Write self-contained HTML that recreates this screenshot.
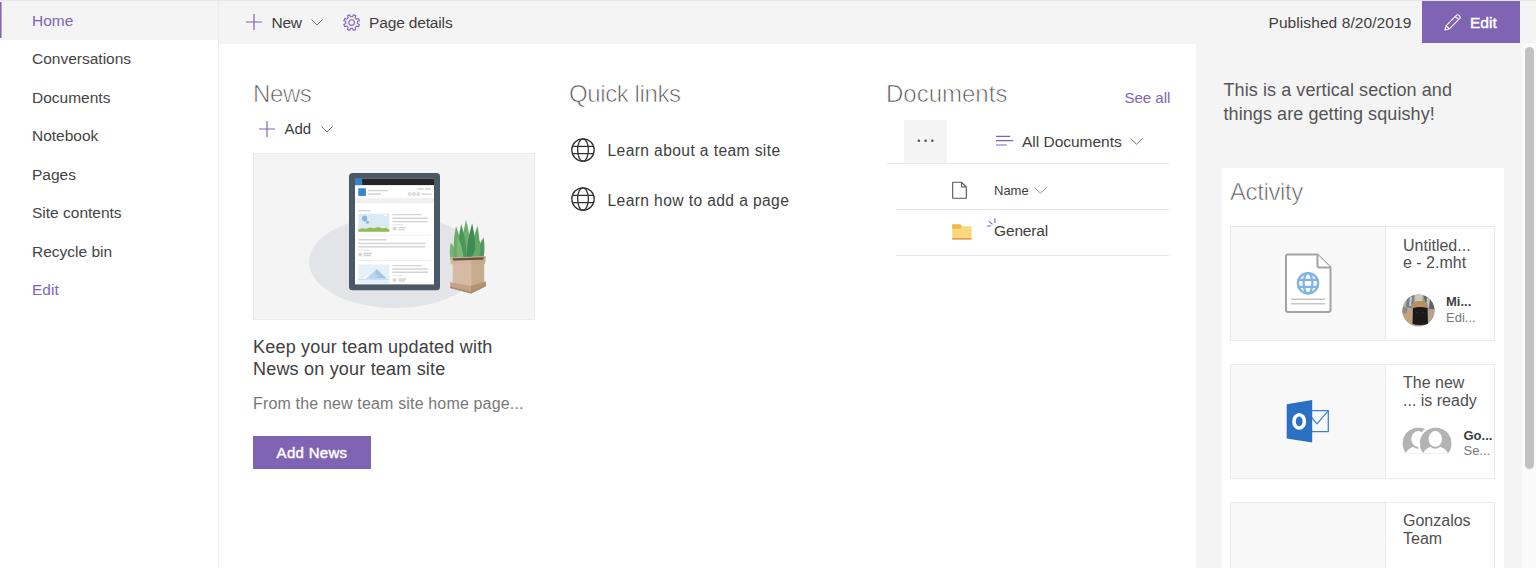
<!DOCTYPE html>
<html><head><meta charset="utf-8">
<style>
html,body{margin:0;padding:0;}
body{width:1536px;height:568px;overflow:hidden;position:relative;background:#fff;font-family:"Liberation Sans",sans-serif;color:#404040;}
.a{position:absolute;white-space:nowrap;line-height:1;}
svg{position:absolute;overflow:visible;}
.nav{font-size:15.5px;color:#444;left:32px;margin-top:0.5px;}
.pur{color:#8064b4;}
.title{font-size:24px;color:#555;letter-spacing:-0.4px;-webkit-text-stroke:0.7px #fff;}
</style></head><body>

<!-- top border line -->
<div style="position:absolute;left:0;top:0;width:1536px;height:1px;background:#e6e6e6"></div>
<!-- left nav -->
<div style="position:absolute;left:0;top:1px;width:218px;height:39px;background:#f4f4f4"></div>
<div style="position:absolute;left:0;top:2px;width:1px;height:36px;background:#8064b4"></div><div style="position:absolute;left:1px;top:2px;width:1px;height:36px;background:#b9a8d6"></div>
<div style="position:absolute;left:218px;top:0;width:1px;height:568px;background:#ebebeb"></div>

<div class="a nav pur" style="top:12.2px">Home</div>
<div class="a nav" style="top:50.7px">Conversations</div>
<div class="a nav" style="top:89.4px">Documents</div>
<div class="a nav" style="top:127.7px">Notebook</div>
<div class="a nav" style="top:166.2px">Pages</div>
<div class="a nav" style="top:204.7px">Site contents</div>
<div class="a nav" style="top:243.2px">Recycle bin</div>
<div class="a nav pur" style="top:281.7px">Edit</div>

<!-- command bar -->
<div style="position:absolute;left:219px;top:1px;width:1317px;height:43px;background:#f4f4f4"></div>
<svg style="left:246px;top:14px" width="16" height="16"><path d="M8 0V16M0 8H16" stroke="#8064b4" stroke-width="1.2"/></svg>
<div class="a" style="left:271.5px;top:15.2px;font-size:15.5px;color:#404040;letter-spacing:-0.3px">New</div>
<svg style="left:311px;top:19px" width="12" height="7"><path d="M0.5 0.5L6 6L11.5 0.5" fill="none" stroke="#777" stroke-width="1"/></svg>
<svg style="left:342.8px;top:13.7px" width="17.2" height="17.2" viewBox="0 0 17.2 17.2"><g fill="none" stroke="#8064b4" stroke-width="1.1" stroke-linejoin="round"><path d="M9.57 2.78 L10.47 0.82 L12.78 1.78 L12.03 3.80 L13.40 5.17 L15.42 4.42 L16.38 6.73 L14.42 7.63 L14.42 9.57 L16.38 10.47 L15.42 12.78 L13.40 12.03 L12.03 13.40 L12.78 15.42 L10.47 16.38 L9.57 14.42 L7.63 14.42 L6.73 16.38 L4.42 15.42 L5.17 13.40 L3.80 12.03 L1.78 12.78 L0.82 10.47 L2.78 9.57 L2.78 7.63 L0.82 6.73 L1.78 4.42 L3.80 5.17 L5.17 3.80 L4.42 1.78 L6.73 0.82 L7.63 2.78Z"/><circle cx="8.6" cy="8.6" r="2.8"/></g></svg>
<div class="a" style="left:369px;top:15.2px;font-size:15.5px;color:#404040;letter-spacing:-0.15px">Page details</div>

<div class="a" style="left:1268.5px;top:15.2px;font-size:15.5px;color:#404040;letter-spacing:0.08px">Published 8/20/2019</div>
<div style="position:absolute;left:1422px;top:1px;width:98px;height:43px;background:#8064b4"></div>
<svg style="left:1444px;top:14px" width="17" height="17" viewBox="0 0 17 17"><g fill="none" stroke="#fff" stroke-width="1.1" stroke-linejoin="round"><path d="M1 16L2.2 11.6L12.6 1.2a1.4 1.4 0 0 1 2 0l1.2 1.2a1.4 1.4 0 0 1 0 2L5.4 14.8z M2.2 11.6L5.4 14.8 M11.4 2.4L14.6 5.6"/></g></svg>
<div class="a" style="left:1470px;top:14.5px;font-size:15.5px;color:#fff;-webkit-text-stroke:0.45px #fff">Edit</div>

<!-- right gray vertical section -->
<div style="position:absolute;left:1196px;top:43px;width:326px;height:525px;background:#f4f4f4"></div>
<!-- scrollbar -->
<div style="position:absolute;left:1522px;top:43px;width:14px;height:525px;background:#fafafa"></div>
<div style="position:absolute;left:1525px;top:47px;width:9px;height:422px;border-radius:4.5px;background:#c1c1c1"></div>


<!-- NEWS -->

<svg style="left:254px;top:154px;z-index:2" width="280" height="165" viewBox="254 154 280 165">
<ellipse cx="395" cy="262" rx="86" ry="46" fill="#e3e4e7"/>
<rect x="349" y="173" width="91" height="117.3" rx="3.5" fill="#4b5865"/>
<rect x="355" y="178.7" width="79" height="105.7" fill="#fff"/>
<rect x="355" y="178.7" width="79" height="6.4" fill="#252525"/>
<rect x="355" y="178.7" width="7.2" height="6.4" fill="#3384cf"/>
<rect x="358.3" y="188.3" width="7.6" height="7.6" fill="#3485cc"/>
<g stroke="#d2d2d2" stroke-width="1.3">
<path d="M368 190.6H388M368 194H381M417.2 189H423.5M425 189H430.5M421.5 194.2H431.5"/>
</g>
<g fill="#dedede" stroke="#cfcfcf" stroke-width="0.5"><circle cx="409.7" cy="194" r="1.7"/><circle cx="414" cy="194" r="1.7"/><circle cx="418.3" cy="194" r="1.7"/></g>
<rect x="355" y="198.2" width="79" height="5" fill="#efefef"/>
<g stroke="#d4d4d4" stroke-width="1.4">
<path d="M358.3 210.7H370.4"/>
<path d="M392.4 214.6H421.6M392.4 218.3H427.8M392.4 221.6H427.8M398.5 227.6H406M398.5 229.6H405"/>
<path d="M358.3 239.8H387M358.3 243.5H425.3M358.3 246.8H425.3M363.5 253.5H372M363.5 255.5H371"/>
<path d="M392.4 265.6H421.6M392.4 269H427.8M392.4 272.3H427.8M398.5 279H406M398.5 281H405"/>
</g>
<g stroke="#e3e3e3" stroke-width="1"><path d="M392.4 224.7H403M358.3 250H369M392.4 275.6H403"/></g>
<g stroke="#efefef" stroke-width="1"><path d="M358 235.2H431M358 260.6H431"/></g>
<g fill="#d8d8d8"><circle cx="394.6" cy="228.6" r="2"/><circle cx="360.3" cy="254.6" r="2"/><circle cx="394.6" cy="280" r="2"/></g>
<rect x="358.3" y="213.7" width="31" height="18.1" fill="#dceaf5"/>
<path d="M358.3 229.5L362 228.3L366 228.8L370 227.6L374 228.2L378 227L382 228.3L386 228L389.3 229.5V231.8H358.3Z" fill="#8dc050"/>
<ellipse cx="364.6" cy="218.5" rx="2.6" ry="3" fill="#8ab6dd"/>
<circle cx="367.5" cy="222.3" r="1.5" fill="#8ab6dd"/>
<path d="M384 215.5H387" stroke="#fff" stroke-width="1"/>
<rect x="358.3" y="264.5" width="31" height="19.4" fill="#e6f0f8"/>
<path d="M376.5 268.9L386.8 278.5H366Z" fill="#9fc4e6"/>
<path d="M376.5 268.9L373 275L370 278.5H361.5L368 275.5Z" fill="#fff"/>
<path d="M376.5 268.9L375 273L379 277L372 278.5H366Z" fill="#b9d5ee"/>
<path d="M358.3 279.5H389.3" stroke="#c7dcee" stroke-width="0.9"/>
<!-- plant -->
<path d="M458.9 262.2Q458.5 252.6 450.8 242.5Q448.3 254.9 452.1 263.8Z" fill="#78b374"/>
<path d="M462.2 262.7Q463.0 245.9 456 225.8Q451.8 246.6 454.8 263.3Z" fill="#6aa96a"/>
<path d="M481.9 263.7Q485.9 252.5 483.6 237.3Q475.6 250.4 475.1 262.3Z" fill="#4f9a5c"/>
<path d="M478.2 263.3Q481.5 246.7 477.5 225.8Q470.2 245.8 470.8 262.7Z" fill="#5da467"/>
<path d="M470.5 263.0Q472.3 243.4 466 219.7Q460.3 243.6 462.5 263.0Z" fill="#6fae6d"/>
<path d="M466.2 262.9Q467.6 245.3 461.3 224Q456.3 245.6 458.8 263.1Z" fill="#4a955a"/>
<path d="M474.2 263.2Q476.9 245.3 472.2 223.2Q465.6 244.8 466.8 262.8Z" fill="#3f8b52"/>
<path d="M464.0 263.7Q464.1 250.9 458 236Q455.2 251.9 458.0 264.3Z" fill="#7cb878"/>
<path d="M476.9 264.7Q481.1 254.3 480 240Q472.3 252.1 471.1 263.3Z" fill="#66a96a"/>
<path d="M452.7 263.5H484.1V282.5L471.4 286L452.7 282.5Z" fill="#d6baa4"/>
<path d="M471.4 263.5H484.1V282.5L471.4 286Z" fill="#c9ab92"/>
<path d="M450.2 257.5L485.6 256.3L485 263.8L471.4 264.5L450.8 264.3Z" fill="#d3b69e"/>
<path d="M471.4 256.8L485.6 256.3L485 263.8L471.4 264.5Z" fill="#c6a88e"/>
<path d="M452.5 258.2L484 257.2L483 259.8L453.2 260.4Z" fill="#6b5242"/>
<path d="M450.2 282L471 285.8L486 281.5V286L471 293.5L450.2 288Z" fill="#c4a286"/>
<path d="M471 285.8L486 281.5V286L471 293.5Z" fill="#b39174"/>
<path d="M450.2 286.5L471 292L486 284.8V286L471 293.5L450.2 288Z" fill="#a98667"/>
</svg>
<div class="a title" style="left:253px;top:82px">News</div>
<svg style="left:259px;top:121px" width="16" height="16"><path d="M8 0V16M0 8H16" stroke="#8064b4" stroke-width="1.2"/></svg>
<div class="a" style="left:284.5px;top:121.3px;font-size:15px;color:#404040">Add</div>
<svg style="left:321px;top:126px" width="12" height="7"><path d="M0.5 0.5L6 6L11.5 0.5" fill="none" stroke="#777" stroke-width="1"/></svg>
<div style="position:absolute;left:253px;top:153px;width:280px;height:165px;background:#f4f4f4;border:1px solid #eaeaea"></div>
<div class="a" style="left:253px;top:337.2px;font-size:18px;line-height:21.5px;color:#404040;white-space:normal;width:290px;letter-spacing:0.2px">Keep your team updated with<br>News on your team site</div>
<div class="a" style="left:253px;top:396px;font-size:16px;color:#777;letter-spacing:0.16px">From the new team site home page...</div>
<div style="position:absolute;left:253px;top:436px;width:118px;height:33px;background:#8064b4"></div>
<div class="a" style="left:253px;top:445.3px;width:118px;text-align:center;font-size:15px;color:#fff;-webkit-text-stroke:0.45px #fff;letter-spacing:0.3px">Add News</div>

<!-- QUICK LINKS -->
<div class="a title" style="left:569px;top:82px">Quick links</div>
<svg style="left:571px;top:138px" width="24" height="24" viewBox="0 0 24 24"><g fill="none" stroke="#333" stroke-width="1.3"><circle cx="12" cy="12" r="11.2"/><ellipse cx="12" cy="12" rx="5.4" ry="11.2"/><path d="M1.2 8.3H22.8M1.2 15.7H22.8"/></g></svg>
<div class="a" style="left:607.5px;top:143.2px;font-size:15.6px;color:#404040;letter-spacing:0.4px">Learn about a team site</div>
<svg style="left:571px;top:187px" width="24" height="24" viewBox="0 0 24 24"><g fill="none" stroke="#333" stroke-width="1.3"><circle cx="12" cy="12" r="11.2"/><ellipse cx="12" cy="12" rx="5.4" ry="11.2"/><path d="M1.2 8.3H22.8M1.2 15.7H22.8"/></g></svg>
<div class="a" style="left:607.5px;top:193px;font-size:15.6px;color:#404040;letter-spacing:0.4px">Learn how to add a page</div>

<!-- DOCUMENTS -->
<div class="a title" style="left:886px;top:82px;letter-spacing:0px">Documents</div>
<div class="a pur" style="left:1124.5px;top:90px;font-size:15px">See all</div>
<div style="position:absolute;left:904px;top:120px;width:43px;height:43px;background:#f4f4f4"></div>
<svg style="left:916px;top:138px" width="20" height="6"><g fill="#555"><circle cx="2.9" cy="2.75" r="1.3"/><circle cx="9.6" cy="2.75" r="1.3"/><circle cx="16.3" cy="2.75" r="1.3"/></g></svg>
<svg style="left:996px;top:135px" width="19" height="11"><g stroke="#8064b4" stroke-width="1.2"><path d="M0 1.4H14.1M0 5.6H17.3M0 10H10.8"/></g></svg>
<div class="a" style="left:1022px;top:133.8px;font-size:15.5px;color:#404040;letter-spacing:-0.02px">All Documents</div>
<svg style="left:1130px;top:138px" width="13" height="7"><path d="M0.5 0.5L6.5 6.3L12.5 0.5" fill="none" stroke="#777" stroke-width="1"/></svg>
<div style="position:absolute;left:887px;top:163px;width:282px;height:1px;background:#e8e8e8"></div>
<svg style="left:952px;top:181px" width="16" height="19" viewBox="0 0 16 19"><path d="M0.7 1.3H9.6L14.3 6V17.3H0.7Z M9.6 1.3V6H14.3" fill="none" stroke="#555" stroke-width="1.1" stroke-linejoin="round"/></svg>
<div class="a" style="left:994px;top:184px;font-size:13px;color:#404040">Name</div>
<svg style="left:1034px;top:187px" width="13" height="7"><path d="M0.5 0.5L6.5 6.3L12.5 0.5" fill="none" stroke="#999" stroke-width="1"/></svg>
<div style="position:absolute;left:896px;top:209px;width:273px;height:1px;background:#e8e8e8"></div>
<svg style="left:952px;top:224px" width="20" height="16" viewBox="0 0 20 16"><rect x="0.2" y="2.3" width="19.3" height="12" fill="#fad77e"/><path d="M0.2 0.3H7.5Q9.5 0.3 9.5 2.3Q9.5 4.8 7.5 4.8H0.2Z" fill="#f0b546"/><rect x="0.2" y="14" width="19.3" height="1.7" fill="#e3a250"/></svg>
<svg style="left:986px;top:217px" width="10" height="10"><g stroke="#8064b4" stroke-width="1.1"><path d="M8.9 1.2V6M2.8 4.2L6.5 7.3M0.9 9.2L5.2 8.8"/></g></svg>
<div class="a" style="left:994px;top:223.3px;font-size:15.5px;color:#404040;letter-spacing:-0.15px">General</div>
<div style="position:absolute;left:896px;top:255px;width:273px;height:1px;background:#e8e8e8"></div>

<!-- VERTICAL SECTION -->
<div class="a" style="left:1223.5px;top:78px;font-size:18px;line-height:24px;color:#555;white-space:normal;width:290px;letter-spacing:0.08px">This is a vertical section and<br>things are getting squishy!</div>
<div style="position:absolute;left:1222px;top:168px;width:282px;height:400px;background:#fff"></div>
<div class="a title" style="left:1230px;top:180px">Activity</div>

<!-- TILE 1 -->
<div style="position:absolute;left:1230px;top:226px;width:263px;height:113px;border:1px solid #eaeaea;background:#fff"></div>
<div style="position:absolute;left:1231px;top:227px;width:154px;height:113px;background:#f8f8f8;border-right:1px solid #eaeaea"></div>
<svg style="left:1284px;top:252px" width="50" height="62" viewBox="1284 252 50 62">
<path d="M1288 254.5H1317.5L1330.5 267.5V310Q1330.5 312 1328.5 312H1288Q1286 312 1286 310V256.5Q1286 254.5 1288 254.5Z" fill="#fff" stroke="#a3a3a3" stroke-width="2" stroke-linejoin="round"/>
<path d="M1317.5 254.5V265.5Q1317.5 267.5 1319.5 267.5H1330.5" fill="#fff" stroke="#a3a3a3" stroke-width="2" stroke-linejoin="round"/>
<g stroke="#7fb3e6" stroke-width="2.3" fill="none"><circle cx="1308" cy="283.3" r="10.1"/><ellipse cx="1308" cy="283.3" rx="4.4" ry="10.1"/><path d="M1297.5 279.8H1318.5M1297.5 286.8H1318.5"/></g>
<path d="M1291 299.3H1325.2M1291 303.8H1325.2" stroke="#c6c6c6" stroke-width="1.5"/>
</svg>
<div class="a" style="left:1403px;top:236.8px;font-size:16px;line-height:17px;color:#505050;white-space:normal;width:90px">Untitled...<br>e - 2.mht</div>
<svg style="left:1402px;top:294px" width="33" height="33" viewBox="0 0 33 33">
<defs><clipPath id="cp1"><circle cx="16.5" cy="16.5" r="16"/></clipPath></defs>
<g clip-path="url(#cp1)">
<rect width="33" height="33" fill="#a39b90"/>
<path d="M0 0H12L10 16H0Z" fill="#b9b2a6"/>
<path d="M5 1L12 0L11 15L4 13Z" fill="#76808c"/>
<path d="M8 3L10 3L9 12L7 12Z" fill="#c8ccd2"/>
<path d="M13 0H21L20 9H13Z" fill="#cfc6b6"/>
<path d="M21 0H33V16L25 14Z" fill="#5f636a"/>
<path d="M25 3L28 4L27 14L24 13Z" fill="#c5c2bc"/>
<path d="M0 17L10 15L11 33H0Z" fill="#c2a27f"/>
<path d="M0 12L6 14L4 19L0 20Z" fill="#8d8a85"/>
<path d="M23 17L33 15V33H23Z" fill="#b7a48e"/>
<ellipse cx="17.5" cy="12" rx="8.5" ry="5" fill="#b98f68"/>
<path d="M11 14Q18 12 25.5 14L26 30Q18 32 10.5 30Z" fill="#1c1a19"/>
<path d="M14 18L16 19M20 18L22 19" stroke="#3a3330" stroke-width="1"/>
</g></svg>
<div class="a" style="left:1446px;top:294.8px;font-size:13px;color:#404040;font-weight:bold">Mi...</div>
<div class="a" style="left:1446px;top:310.8px;font-size:13px;color:#777">Edi...</div>

<!-- TILE 2 -->
<div style="position:absolute;left:1230px;top:364px;width:263px;height:113px;border:1px solid #eaeaea;background:#fff"></div>
<div style="position:absolute;left:1231px;top:365px;width:154px;height:113px;background:#f8f8f8;border-right:1px solid #eaeaea"></div>
<svg style="left:1284px;top:398px" width="48" height="46" viewBox="1284 398 48 46">
<g fill="none" stroke="#3f82d0" stroke-width="1.3" stroke-linejoin="round"><path d="M1306 410.7H1328.3V431.6H1306Z"/><path d="M1306 410.7L1317 423.8L1328.3 410.7"/></g>
<path d="M1286.7 404.3L1312.2 400.1V442.6L1286.7 438.4Z" fill="#2c70c4"/>
<ellipse cx="1299.2" cy="421.4" rx="5.2" ry="6.6" fill="none" stroke="#fff" stroke-width="3.6"/>
</svg>
<div class="a" style="left:1403px;top:374.3px;font-size:16px;line-height:17.5px;color:#505050;white-space:normal;width:90px">The new<br>... is ready</div>
<svg style="left:1400px;top:426px" width="56" height="30" viewBox="0 0 56 30">
<defs><clipPath id="cpa"><circle cx="18.4" cy="17.4" r="16"/></clipPath><clipPath id="cpb"><circle cx="35.7" cy="17.4" r="16"/></clipPath><clipPath id="cpc"><rect x="0" y="0" width="56" height="27.3"/></clipPath></defs>
<g clip-path="url(#cpc)">
<g clip-path="url(#cpa)"><circle cx="18.4" cy="17.4" r="16" fill="#b3b3b3"/><ellipse cx="18.2" cy="30" rx="13" ry="10" fill="#fff"/><ellipse cx="18" cy="12.9" rx="8.8" ry="9.8" fill="#b3b3b3"/><ellipse cx="18" cy="12.9" rx="6.7" ry="7.8" fill="#fff"/></g>
<circle cx="35.7" cy="17.4" r="18" fill="#fff"/>
<g clip-path="url(#cpb)"><circle cx="35.7" cy="17.4" r="16" fill="#b3b3b3"/><ellipse cx="35.5" cy="30" rx="13" ry="10" fill="#fff"/><ellipse cx="35.3" cy="12.9" rx="8.8" ry="9.8" fill="#b3b3b3"/><ellipse cx="35.3" cy="12.9" rx="6.7" ry="7.8" fill="#fff"/></g>
</g>
</svg>
<div class="a" style="left:1463.5px;top:429px;font-size:13px;color:#404040;font-weight:bold">Go...</div>
<div class="a" style="left:1463.5px;top:444.2px;font-size:13px;color:#777">Se...</div>

<!-- TILE 3 -->
<div style="position:absolute;left:1230px;top:502px;width:263px;height:113px;border:1px solid #eaeaea;background:#fff"></div>
<div style="position:absolute;left:1231px;top:503px;width:154px;height:113px;background:#f8f8f8;border-right:1px solid #eaeaea"></div>
<div class="a" style="left:1403px;top:512.3px;font-size:16px;line-height:17.5px;color:#505050;white-space:normal;width:90px">Gonzalos<br>Team</div>
</body></html>
